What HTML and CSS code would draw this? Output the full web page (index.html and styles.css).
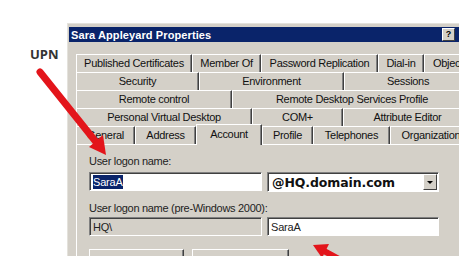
FILE: index.html
```html
<!DOCTYPE html>
<html lang="en">
<head>
  <meta charset="UTF-8">
  <meta name="viewport" content="width=device-width, initial-scale=1.0">
  <title>Sara Appleyard Properties</title>
  <link rel="stylesheet" href="styles.css">
</head>
<body>
  <div class="page">
    <div class="note"><span class="upn">UPN</span></div>

    <div class="dialog">
      <div class="titlebar">
        <span class="title">Sara Appleyard Properties</span>
        <span class="help">?</span>
      </div>

      <div class="tabs">
        <div class="tab-row">
          <div class="tab w116">Published Certificates</div>
          <div class="tab w69">Member Of</div>
          <div class="tab w117">Password Replication</div>
          <div class="tab w46">Dial-in</div>
          <div class="tab rest">Object</div>
        </div>
        <div class="tab-row">
          <div class="tab w123">Security</div>
          <div class="tab w145">Environment</div>
          <div class="tab rest">Sessions</div>
        </div>
        <div class="tab-row">
          <div class="tab w156">Remote control</div>
          <div class="tab rest">Remote Desktop Services Profile</div>
        </div>
        <div class="tab-row">
          <div class="tab w176">Personal Virtual Desktop</div>
          <div class="tab w91">COM+</div>
          <div class="tab rest">Attribute Editor</div>
        </div>
        <div class="tab-row">
          <div class="tab w59">General</div>
          <div class="tab w61">Address</div>
          <div class="tab w66 active">Account</div>
          <div class="tab w51">Profile</div>
          <div class="tab w77">Telephones</div>
          <div class="tab rest">Organization</div>
        </div>
      </div>

      <div class="panel">
        <div class="field-label">User logon name:</div>
        <div class="field-row">
          <div class="textbox"><span class="selected">SaraA</span></div>
          <div class="combo">
            <span class="combo-value">@HQ.domain.com</span>
            <span class="combo-btn"><span class="caret"></span></span>
          </div>
        </div>

        <div class="field-label second">User logon name (pre-Windows 2000):</div>
        <div class="field-row">
          <div class="textbox disabled">HQ\</div>
          <div class="textbox wide">SaraA</div>
        </div>

        <div class="button-row">
          <div class="btn">Logon Hours...</div>
          <div class="btn">Log On To...</div>
        </div>
      </div>
    </div>
  </div>

  <!-- red callout arrows drawn over the screenshot -->
  <svg class="arrows" width="459" height="256" viewBox="0 0 459 256">
    <line x1="40" y1="72" x2="96" y2="142" stroke="#e3151b" stroke-width="7" stroke-linecap="round"/>
    <polygon points="106,155 89,147 103,135" fill="#e3151b"/>
    <line x1="352" y1="266" x2="324" y2="251" stroke="#e3151b" stroke-width="6" stroke-linecap="round"/>
    <polygon points="313,245 329,244 322,258" fill="#e3151b"/>
  </svg>
</body>
</html>
```

FILE: styles.css
```css
body {
  margin: 0;
  width: 459px;
  height: 256px;
  overflow: hidden;
  background: #fff;
  position: relative;
  font-family: 'Liberation Sans', Arial, sans-serif;
  font-size: 11px;
  color: #000;
}

.page {
  display: flex;
  padding-top: 23px;
}

.note {
  width: 67px;
  flex: none;
  padding: 22px 0 0 30px;
  box-sizing: border-box;
}

.upn {
  font-family: 'Open Sans', 'Liberation Sans', sans-serif;
  font-weight: bold;
  font-size: 13px;
  color: #333;
}

.dialog {
  width: 413px;
  flex: none;
  box-sizing: border-box;
  height: 260px;
  background: #d4d0c8;
  border-top: 1px solid #e4e2dc;
  border-left: 1px solid #e4e2dc;
  padding: 3px 8px 0 8px;
}

.titlebar {
  margin: 0 -7px;
  height: 15px;
  background: #0a246a;
  display: flex;
  align-items: center;
  justify-content: space-between;
  padding: 0 2px 0 2px;
}

.title {
  color: #fff;
  font-weight: bold;
  font-size: 11px;
  letter-spacing: 0.1px;
}

.help {
  width: 11px;
  height: 11px;
  margin-right: 22px;
  background: #d4d0c8;
  border-top: 1px solid #fff;
  border-left: 1px solid #fff;
  border-right: 1px solid #404040;
  border-bottom: 1px solid #404040;
  font-weight: bold;
  font-size: 9px;
  line-height: 11px;
  text-align: center;
}

.tabs {
  margin-top: 12px;
}

.tab-row {
  display: flex;
  height: 18px;
}

.tab {
  flex: none;
  box-sizing: border-box;
  height: 18px;
  border-top: 1px solid #fff;
  border-left: 1px solid #fff;
  border-right: 1px solid #404040;
  box-shadow: inset -1px 0 #808080;
  background: #d4d0c8;
  text-align: center;
  line-height: 17px;
  white-space: nowrap;
  overflow: hidden;
  letter-spacing: -0.3px;
  color: #111;
}

.tab.rest {
  flex: 1;
}

.tab.active {
  height: 21px;
  margin-top: -2px;
  margin-bottom: -1px;
  line-height: 19px;
  position: relative;
}

.w46 { width: 46px; }
.w51 { width: 51px; }
.w59 { width: 59px; }
.w61 { width: 61px; }
.w66 { width: 66px; }
.w69 { width: 69px; }
.w77 { width: 77px; }
.w91 { width: 91px; }
.w116 { width: 116px; }
.w117 { width: 117px; }
.w123 { width: 123px; }
.w145 { width: 145px; }
.w156 { width: 156px; }
.w176 { width: 176px; }

.panel {
  border-top: 1px solid #fff;
  border-left: 1px solid #fff;
  height: 120px;
  padding: 10px 0 0 12px;
}

.field-label {
  line-height: 13px;
  height: 13px;
  letter-spacing: -0.3px;
  color: #222;
}

.field-label.second {
  margin-top: 10px;
}

.field-row {
  display: flex;
  gap: 5px;
  margin-top: 4px;
}

.field-label.second + .field-row {
  margin-top: 2px;
}

.textbox {
  width: 173px;
  height: 19px;
  box-sizing: border-box;
  background: #fff;
  border-top: 1px solid #808080;
  border-left: 1px solid #808080;
  border-right: 1px solid #fff;
  border-bottom: 1px solid #fff;
  box-shadow: inset 1px 1px #404040;
  padding: 2px 0 0 3px;
  line-height: 14px;
  letter-spacing: -0.2px;
  color: #222;
}

.textbox.wide {
  width: 172px;
}

.textbox.disabled {
  background: #d4d0c8;
}

.field-row:first-of-type .textbox {
  height: 20px;
}

.selected {
  background: #0a246a;
  color: #fff;
  padding: 1px 0;
}

.combo {
  width: 172px;
  height: 20px;
  box-sizing: border-box;
  background: #fff;
  border-top: 1px solid #808080;
  border-left: 1px solid #808080;
  border-right: 1px solid #fff;
  border-bottom: 1px solid #fff;
  box-shadow: inset 1px 1px #404040;
  display: flex;
  align-items: center;
  justify-content: space-between;
  padding: 1px 1px 1px 4px;
}

.combo-value {
  font-family: 'DejaVu Sans', Verdana, sans-serif;
  font-weight: bold;
  font-size: 12.5px;
  letter-spacing: -0.1px;
  color: #111;
}

.combo-btn {
  width: 14px;
  height: 16px;
  box-sizing: border-box;
  background: #d4d0c8;
  border-top: 1px solid #fff;
  border-left: 1px solid #fff;
  border-right: 1px solid #404040;
  border-bottom: 1px solid #404040;
  display: flex;
  align-items: center;
  justify-content: center;
}

.caret {
  width: 0;
  height: 0;
  border-left: 3px solid transparent;
  border-right: 3px solid transparent;
  border-top: 3px solid #000;
}

.button-row {
  display: flex;
  gap: 8px;
  margin-top: 13px;
}

.btn {
  width: 95px;
  height: 23px;
  box-sizing: border-box;
  background: #d4d0c8;
  border-top: 1px solid #fff;
  border-left: 1px solid #fff;
  border-right: 1px solid #404040;
  border-bottom: 1px solid #404040;
  box-shadow: inset -1px -1px #808080;
  text-align: center;
  line-height: 21px;
  padding-top: 2px;
}

.btn + .btn {
  width: 97px;
}

.arrows {
  position: absolute;
  top: 0;
  left: 0;
  pointer-events: none;
}
```
